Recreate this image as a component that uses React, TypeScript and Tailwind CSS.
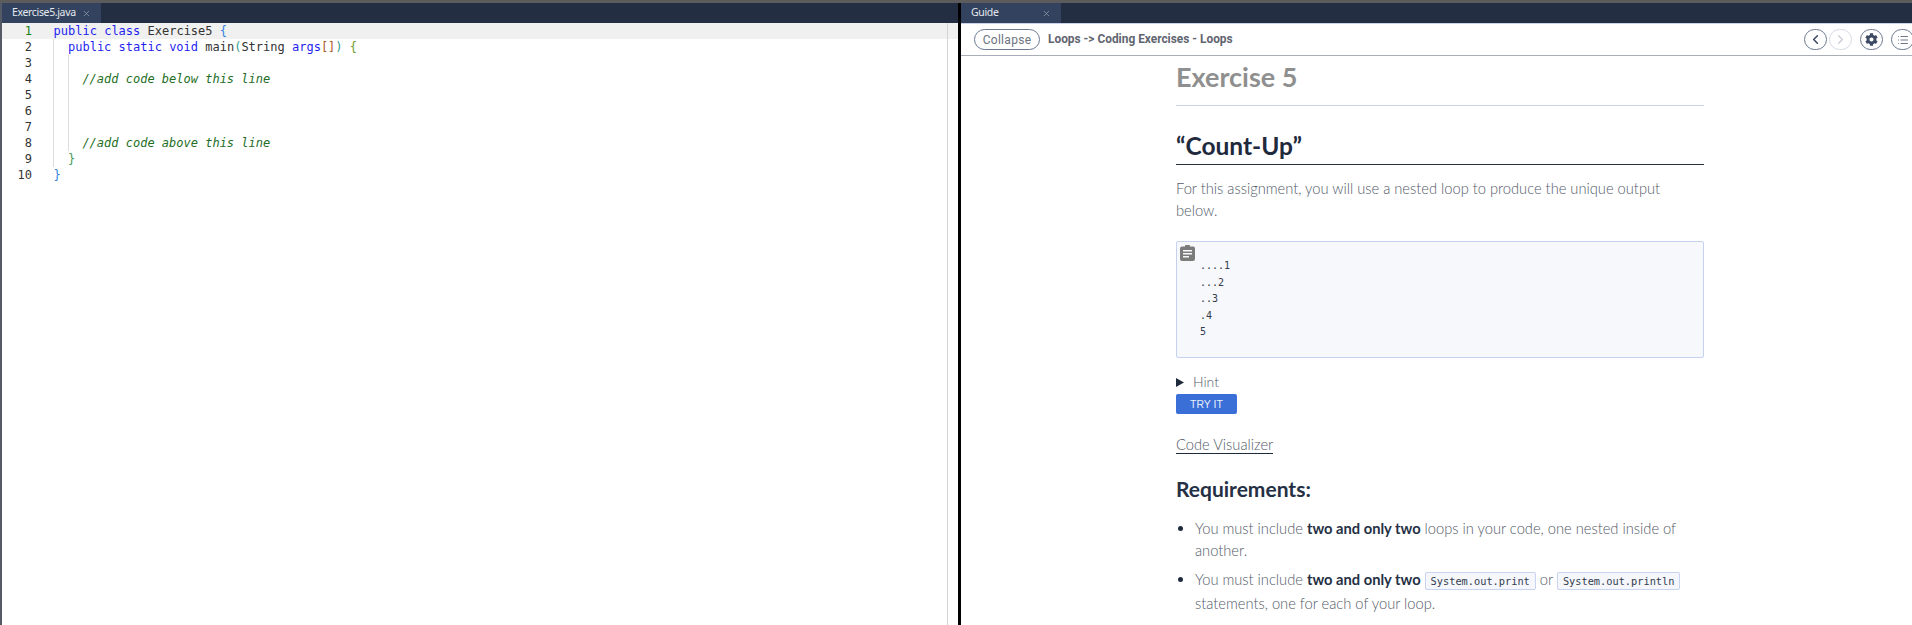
import React from "react";
import { ChevronLeft, ChevronRight, List, X } from "lucide-react";
import { FaCog } from "react-icons/fa";

const C = { kw: "text-[#1f1ff0]", cm: "text-[#236e25]" };

function Tab({ label, w }: { label: string; w: string }) {
  return (
    <div className={`flex h-5 items-center justify-between bg-[#33435f] pl-[10px] pr-[5px] text-[10.5px] tracking-[-0.35px] text-[#e6e9ef] ${w}`}>
      <span>{label}</span>
      <X size={9} className="mr-[5px] text-[#aeb5c2]" strokeWidth={1.5} />
    </div>
  );
}

function Line({ n, level = 0, active = false, children }: { n: number; level?: number; active?: boolean; children?: React.ReactNode }) {
  const guide1 = level >= 1 ? "shadow-[inset_1px_0_0_#dddddd]" : "";
  const guide2 = level >= 2 ? "shadow-[inset_1px_0_0_#dddddd]" : "";
  return (
    <div className={`flex h-4 leading-4 ${active ? "bg-[#f0f0f0]" : ""}`}>
      <div className={`w-[30px] shrink-0 text-right ${active ? "text-[#1a7f1a]" : "text-[#333333]"}`}>{n}</div>
      <div className={`ml-[21px] flex-1 whitespace-pre pl-[0.6px] ${guide1}`}>
        {level >= 1 ? <span className="inline-block w-[14.4px]" /> : null}
        <span className={`inline-block h-4 align-top ${guide2}`}>{children ?? "\u00a0"}</span>
      </div>
    </div>
  );
}

function Round({ children, className = "" }: { children: React.ReactNode; className?: string }) {
  return (
    <div className={`flex h-[21px] w-[23px] shrink-0 items-center justify-center rounded-full border border-[#6d7a92] text-[#3d4a63] ${className}`}>
      {children}
    </div>
  );
}

function Code({ children }: { children: React.ReactNode }) {
  return (
    <code className="rounded-[2px] border border-[#c9d5f0] bg-[#f5f7fc] px-[5px] py-[2px] text-[10.3px] text-[#333c4d] [font-family:'DejaVu_Sans_Mono',monospace]">
      {children}
    </code>
  );
}

export default function App() {
  return (
    <div className="flex h-[625px] w-[1912px] overflow-hidden border-t-[3px] border-[#5c5c5c] bg-white [font-family:'Noto_Sans',sans-serif]">
      {/* Editor */}
      <div className="flex h-full w-[958px] shrink-0 flex-col border-l-2 border-[#555b66]">
        <div className="h-5 shrink-0 bg-[#232e42]">
          <Tab label="Exercise5.java" w="w-[99px]" />
        </div>
        <div className="relative flex-1 text-[12px] text-[#333333] [font-family:'DejaVu_Sans_Mono',monospace]">
          <Line n={1} active>
            <span className={C.kw}>public class</span> Exercise5 <span className="text-[#2f7fe0]">{"{"}</span>
          </Line>
          <Line n={2} level={1}>
            <span className={C.kw}>public static void</span> main<span className="text-[#2f9a8a]">(</span>String <span className={C.kw}>args</span><span className="text-[#b0561a]">[]</span><span className="text-[#2f9a8a]">)</span> <span className="text-[#6f9a2a]">{"{"}</span>
          </Line>
          <Line n={3} level={2} />
          <Line n={4} level={2}>
            <span className={`pl-[14.4px] italic ${C.cm}`}>//add code below this line</span>
          </Line>
          <Line n={5} level={2} />
          <Line n={6} level={2} />
          <Line n={7} level={2} />
          <Line n={8} level={2}>
            <span className={`pl-[14.4px] italic ${C.cm}`}>//add code above this line</span>
          </Line>
          <Line n={9} level={1}>
            <span className="text-[#3f9a5a]">{"}"}</span>
          </Line>
          <Line n={10}>
            <span className="text-[#2f7fe0]">{"}"}</span>
          </Line>
          <div className="absolute inset-y-0 left-[945px] w-px bg-[#d4d4d4]" />
        </div>
      </div>

      {/* Divider */}
      <div className="h-full w-[3px] shrink-0 bg-black" />

      {/* Guide */}
      <div className="flex h-full min-w-0 flex-1 flex-col">
        <div className="h-5 shrink-0 bg-[#232e42]">
          <Tab label="Guide" w="w-[100px]" />
        </div>
        <div className="flex h-[33px] shrink-0 items-center border-b border-t border-b-[#a9adb5] border-t-[#c9d2e8] pl-[13px] [font-family:Roboto,sans-serif]">
          <div className="flex h-[21px] w-[66px] items-center justify-center rounded-full border border-[#6d7a92] text-[12px] tracking-[0.3px] text-[#6d7480]">
            Collapse
          </div>
          <div className="ml-2 text-[11.9px] font-bold text-[#5f6570]">Loops -&gt; Coding Exercises - Loops</div>
          <div className="ml-auto flex items-center">
            <Round><ChevronLeft size={15} strokeWidth={2.5} /></Round>
            <Round className="ml-[2px] border-[#d6dae2] text-[#c8ccd4]"><ChevronRight size={15} strokeWidth={2} /></Round>
            <Round className="ml-2"><FaCog size={13} /></Round>
            <Round className="ml-2 mr-[-2px]"><List size={12} strokeWidth={1.5} /></Round>
          </div>
        </div>

        <div className="ml-[215px] w-[528px] text-[14px] leading-[22px] text-[#535a68] [font-family:Lato,sans-serif]">
          <h1 className="mt-[3px] border-b border-[#c9d2e8] pb-[10px] text-[27px] font-bold leading-[36px] text-[#8f8f8f]">Exercise 5</h1>
          <h2 className="mt-[23px] border-b border-[#2a3142] pb-[1px] text-[24.5px] font-bold leading-[34px] text-[#1f2a3d]">“Count-Up”</h2>
          <p className="mt-[12px] text-[14.7px] font-light">For this assignment, you will use a nested loop to produce the unique output below.</p>
          <div className="mt-[20px] h-[117px] rounded-[2px] border border-[#c5d1ef] bg-[#f7f8fc] pl-[3px] pt-[3px]">
            <svg width="15" height="16" viewBox="0 0 15 16" className="block">
              <rect x="0" y="1.5" width="15" height="14.5" rx="2" fill="#7b7b7b" />
              <rect x="5" y="0" width="5" height="3" rx="1" fill="#7b7b7b" />
              <rect x="3" y="5" width="9" height="1.5" fill="#f7f8fc" />
              <rect x="3" y="8" width="9" height="1.5" fill="#f7f8fc" />
              <rect x="3" y="11" width="6" height="1.5" fill="#f7f8fc" />
            </svg>
            <pre className="ml-[20px] mt-[-3px] text-[10px] leading-[16.5px] text-[#333c4d] [font-family:'DejaVu_Sans_Mono',monospace]">{"....1\n...2\n..3\n.4\n5"}</pre>
          </div>
          <div className="mt-[13px] flex h-[22px] items-center font-light">
            <svg width="8" height="9" viewBox="0 0 8 9"><path d="M0 0 L8 4.5 L0 9 Z" fill="#1f2a3d" /></svg>
            <span className="ml-[9px]">Hint</span>
          </div>
          <div className="mt-px flex h-5 w-[61px] items-center justify-center rounded-[2px] bg-[#3a6fd8] text-[10.5px] text-[#e8eefb] [font-family:'Liberation_Sans',sans-serif]">TRY IT</div>
          <div className="mt-[19px] text-[14.7px] font-light leading-[22px]"><span className="border-b border-[#1f2a3d]">Code Visualizer</span></div>
          <h3 className="mt-[20px] text-[21px] font-bold leading-[28px] text-[#253044]">Requirements:</h3>
          <ul className="mt-[14px] list-disc pl-[19px] text-[14.7px] font-light marker:text-[#1f2a3d]">
            <li className="pb-[7px]">You must include <b className="font-bold text-[#253044]">two and only two</b> loops in your code, one nested inside of another.</li>
            <li>You must include <b className="font-bold text-[#253044]">two and only two</b> <Code>System.out.print</Code> or <Code>System.out.println</Code> statements, one for each of your loop.</li>
          </ul>
        </div>
      </div>
    </div>
  );
}
